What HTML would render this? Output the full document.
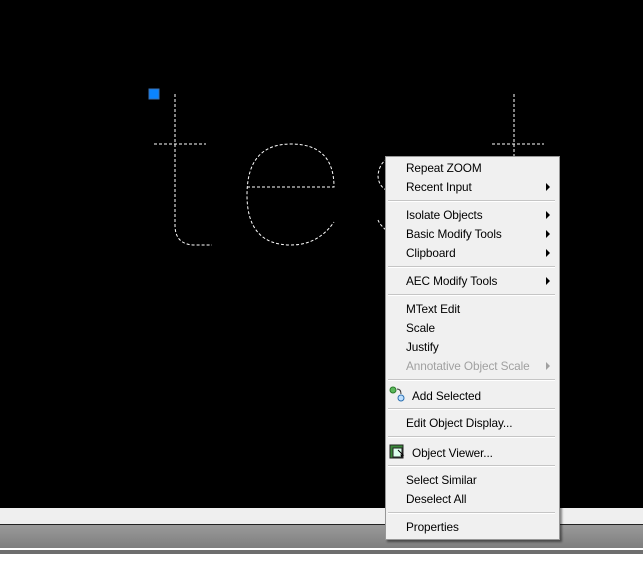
<!DOCTYPE html><html><head><style>
body{margin:0;width:643px;height:561px;background:#fff;position:relative;overflow:hidden;font-family:Tahoma,"Liberation Sans","DejaVu Sans",sans-serif;font-size:11.8px}
.bk{position:absolute;left:0;top:0;width:643px;height:508px;background:#000}
.menu{position:absolute;left:385px;top:156px;width:173px;height:382px;background:#f0f0f0;border:1px solid #979797;box-shadow:2px 2px 2px rgba(0,0,0,.45)}
.it{position:absolute;left:20px;color:#000;line-height:14px;letter-spacing:-0.1px}
.dis{color:#a0a0a0}
.ar{position:absolute;left:160px;width:0;height:0;border-left:4px solid #000;border-top:4px solid transparent;border-bottom:4px solid transparent}
.sep{position:absolute;left:2px;width:167px;height:1px;background:#c5c5c5;border-bottom:1px solid #fff}
</style></head><body>
<div class="bk"></div>
<svg width="643" height="508" style="position:absolute;left:0;top:0">
<rect x="149" y="89" width="10" height="10" fill="#0a84ff" stroke="#3a6fb0"/>
<g fill="none" stroke="#fff" stroke-dasharray="3,2" stroke-width="1">
<path d="M175 94V225Q175 245 195 245H212"/>
<path d="M154 144H206"/>
<path d="M247 187H334Q334 144 291 144Q247 144 247 195Q247 245 291 245Q318 245 334 222"/>
<path d="M392 157Q380 160 378 175Q378 185 386 190"/>
<path d="M386 230Q380 225 378 220"/>
<path d="M514 94V156"/>
<path d="M492 144H544"/>
</g></svg>
<div style="position:absolute;left:0;top:508px;width:643px;height:16px;background:#efefef"></div>
<div style="position:absolute;left:0;top:524px;width:643px;height:1px;background:#222"></div>
<div style="position:absolute;left:0;top:525px;width:643px;height:23px;background:linear-gradient(#9a9a9a,#7e7e7e)"></div>
<div style="position:absolute;left:0;top:550px;width:643px;height:4px;background:#6e6e6e"></div>
<div class="menu">
<div class="it" style="top:4px">Repeat ZOOM</div>
<div class="it" style="top:23px">Recent Input</div><div class="ar" style="top:26px"></div>
<div class="sep" style="top:43px"></div>
<div class="it" style="top:51px">Isolate Objects</div><div class="ar" style="top:54px"></div>
<div class="it" style="top:70px">Basic Modify Tools</div><div class="ar" style="top:73px"></div>
<div class="it" style="top:89px">Clipboard</div><div class="ar" style="top:92px"></div>
<div class="sep" style="top:109px"></div>
<div class="it" style="top:117px">AEC Modify Tools</div><div class="ar" style="top:120px"></div>
<div class="sep" style="top:137px"></div>
<div class="it" style="top:145px">MText Edit</div>
<div class="it" style="top:164px">Scale</div>
<div class="it" style="top:183px">Justify</div>
<div class="it dis" style="top:202px">Annotative Object Scale</div><div class="ar" style="top:205px;border-left-color:#a0a0a0"></div>
<div class="sep" style="top:222px"></div>
<svg style="position:absolute;left:3px;top:229px" width="16" height="16"><circle cx="4" cy="4" r="3" fill="#5cb85c" stroke="#2a7a2a"/><circle cx="12" cy="12" r="3" fill="#bfe0ff" stroke="#2a6fb0"/><path d="M8 3Q12 3 12 8" fill="none" stroke="#333"/></svg>
<div class="it" style="top:232px;left:26px">Add Selected</div>
<div class="sep" style="top:251px"></div>
<div class="it" style="top:259px">Edit Object Display...</div>
<div class="sep" style="top:279px"></div>
<svg style="position:absolute;left:3px;top:287px" width="16" height="16"><rect x="1" y="1" width="13" height="13" fill="#3a8a3a" stroke="#222"/><rect x="4" y="4" width="9" height="9" fill="#dfe" stroke="#222"/><path d="M9 6l5 5-2 0 1 2" stroke="#000" fill="#fff"/></svg>
<div class="it" style="top:289px;left:26px">Object Viewer...</div>
<div class="sep" style="top:308px"></div>
<div class="it" style="top:316px">Select Similar</div>
<div class="it" style="top:335px">Deselect All</div>
<div class="sep" style="top:355px"></div>
<div class="it" style="top:363px">Properties</div>
</div>
</body></html>
